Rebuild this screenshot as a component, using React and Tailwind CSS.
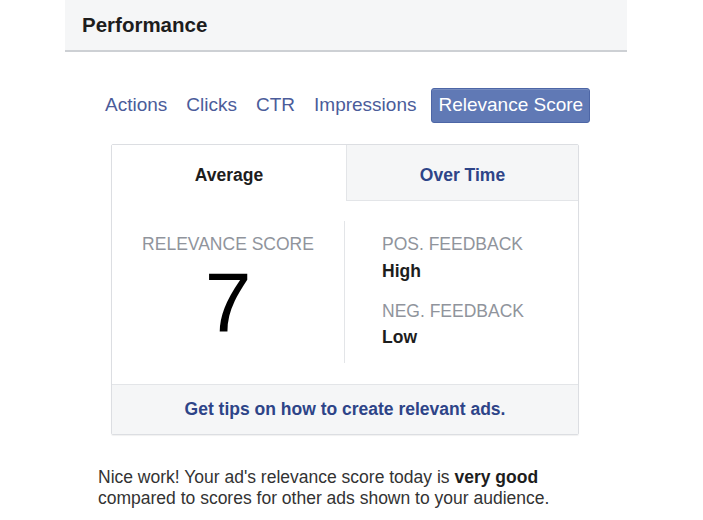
import clsx from 'clsx';

const METRICS = ['Actions', 'Clicks', 'CTR', 'Impressions', 'Relevance Score'];

export default function App() {
  const active = 'Relevance Score';

  return (
    <div className="w-[703px] h-[520px] bg-white overflow-hidden font-['Liberation_Sans',Arial,sans-serif] text-[#1d2129]">
      {/* Section header */}
      <div className="ml-[65px] w-[562px] h-[52px] bg-[#f5f6f7] border-b-2 border-[#cdd0d4] flex items-center px-[17px]">
        <h2 className="text-[20.5px] font-bold text-[#1d1d1d]">Performance</h2>
      </div>

      {/* Metric switcher */}
      <div className="mt-[35px] ml-[101px] flex items-center h-[36px]">
        {METRICS.map((m) => (
          <button
            key={m}
            type="button"
            className={clsx(
              'text-[19px] leading-none h-[35px] px-[4px] mr-[11px] pb-[2px] rounded-[3px]',
              m === active
                ? 'bg-[#6079b5] border border-[#4d66a6] text-white px-[6px] shadow-[inset_0_1px_0_rgba(255,255,255,0.15)]'
                : 'text-[#4b5c9a]'
            )}
          >
            {m}
          </button>
        ))}
      </div>

      {/* Score card */}
      <div className="mt-[21px] ml-[111px] w-[468px] border border-[#dcdee2] rounded-[2px] shadow-[0_1px_1px_rgba(0,0,0,0.06)]">
        {/* Tabs */}
        <div className="flex h-[56px]">
          <div className="w-[234px] flex items-center justify-center pt-[5px] text-[17.5px] font-bold text-[#1d1d1d] bg-white">
            Average
          </div>
          <div className="flex-1 flex items-center justify-center pt-[5px] text-[17.5px] font-bold text-[#2d4488] bg-[#f5f6f7] border-l border-b border-[#e3e5e8]">
            Over Time
          </div>
        </div>

        {/* Body */}
        <div className="flex pt-[20px] pb-[21px]">
          <div className="w-[233px] flex flex-col items-center border-r border-[#e3e5e8] h-[142px]">
            <span className="mt-[13px] text-[17.5px] leading-[20px] text-[#90949c]">RELEVANCE SCORE</span>
            <span className="mt-[8px] text-[84px] leading-[80px] text-black">7</span>
          </div>
          <div className="flex-1 pl-[37px] pt-[13px]">
            <div className="text-[17.5px] leading-[20px] text-[#90949c]">POS. FEEDBACK</div>
            <div className="mt-[7px] text-[17.5px] leading-[20px] font-bold text-[#1d1d1d]">High</div>
            <div className="mt-[20px] text-[17.5px] leading-[20px] text-[#90949c]">NEG. FEEDBACK</div>
            <div className="mt-[6px] text-[17.5px] leading-[20px] font-bold text-[#1d1d1d]">Low</div>
          </div>
        </div>

        {/* Footer link */}
        <div className="h-[50px] bg-[#f5f6f7] border-t border-[#e3e5e8] flex items-center justify-center">
          <a className="text-[17.5px] font-bold text-[#2d4488]">Get tips on how to create relevant ads.</a>
        </div>
      </div>

      {/* Summary */}
      <p className="mt-[32px] ml-[98px] w-[480px] text-[17.5px] leading-[21px] text-[#333]">
        Nice work! Your ad's relevance score today is <strong className="text-[#1d1d1d]">very good</strong>{' '}
        compared to scores for other ads shown to your audience.
      </p>
    </div>
  );
}
